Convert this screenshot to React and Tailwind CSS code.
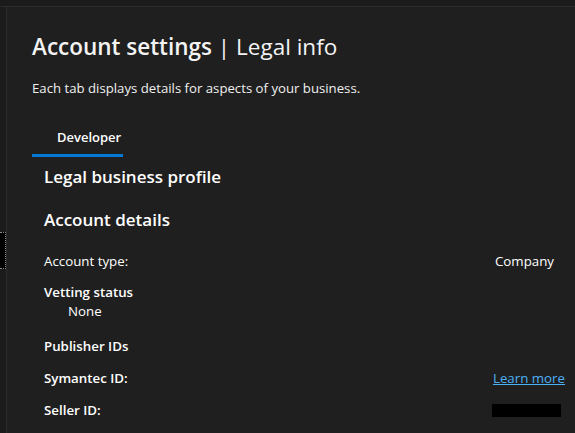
export default function App() {
  return (
    <div className="h-[433px] w-full overflow-hidden bg-[#1b1b1b] text-white font-['Open_Sans',sans-serif] flex flex-col">
      <div className="h-[7px] shrink-0 border-b border-[#2c2c2c]" />
      <div className="flex flex-1">
        <div className="w-[7px] shrink-0 border-r border-[#2c2c2c] pt-[225px]">
          <div className="h-[37px] w-[6px] bg-black border-y border-r border-dotted border-[#8a8a8a]" />
        </div>
        <div className="flex-1 bg-[#1f1f1f] pl-[25px] pt-[25px]">
          <h1 className="text-[22.5px] leading-[30px] text-[#f3f3f3]">
            <span className="font-semibold">Account settings</span>
            <span className="font-normal"> | Legal info</span>
          </h1>
          <p className="mt-[17px] text-[13.2px] leading-[18px] text-[#f0f0f0]">
            Each tab displays details for aspects of your business.
          </p>

          <div className="mt-[27px] w-[91px] border-b-[3px] border-[#0078d4] pb-[6px] pl-[25px]">
            <span className="text-[13px] font-semibold leading-[18px]">Developer</span>
          </div>

          <div className="pl-[12px] pr-[21px] text-[13.3px]">
            <h2 className="mt-[8px] text-[17px] font-semibold leading-[24px]">Legal business profile</h2>
            <h2 className="mt-[19px] text-[17px] font-semibold leading-[24px]">Account details</h2>

            <div className="mt-[20px] flex justify-between leading-[18px]">
              <span>Account type:</span>
              <span>Company</span>
            </div>

            <div className="mt-[13px] leading-[18px]">
              <div className="font-semibold">Vetting status</div>
              <div className="pl-[24px] mt-[1px]">None</div>
            </div>

            <div className="mt-[17px] font-semibold leading-[18px]">Publisher IDs</div>

            <div className="mt-[14px] flex justify-between leading-[18px]">
              <span className="font-semibold">Symantec ID:</span>
              <a href="#" className="text-[#4cb0f5] underline -mr-[11px]">Learn more</a>
            </div>

            <div className="mt-[14px] flex justify-between items-center leading-[18px]">
              <span className="font-semibold">Seller ID:</span>
              <span className="h-[13px] w-[69px] bg-black -mr-[7px]" />
            </div>
          </div>
        </div>
      </div>
    </div>
  );
}
